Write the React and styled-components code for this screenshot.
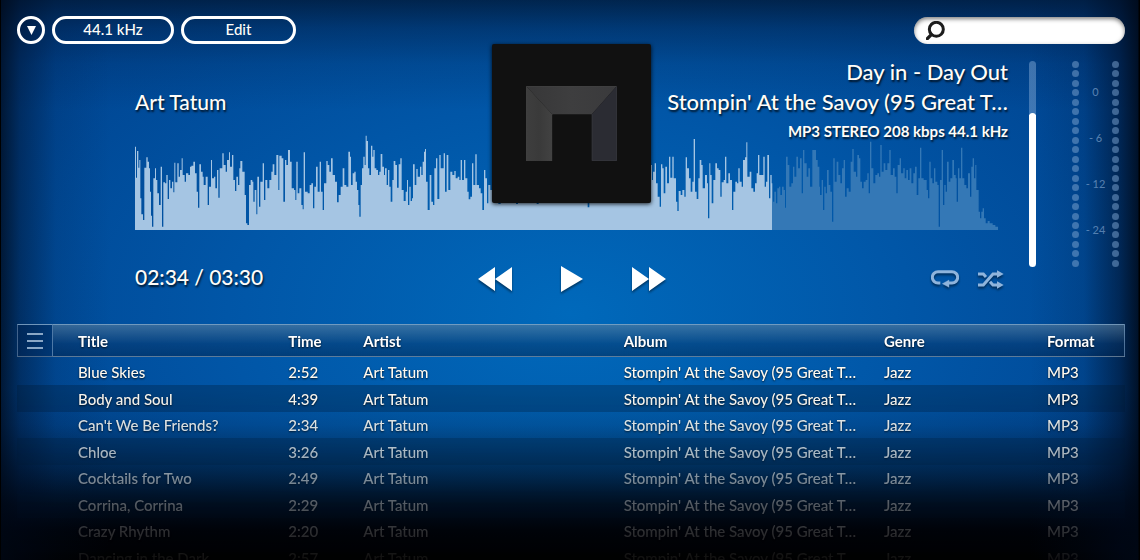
import React from "react";
import styled, { createGlobalStyle, css } from "styled-components";

const GlobalStyle = createGlobalStyle`
  *, *::before, *::after { box-sizing: border-box; }
  body {
    margin: 0;
    background: #000;
    color: #fffdf8;
    font-family: Lato, "Liberation Sans", sans-serif;
    font-size: 15px;
    font-weight: 500;
  }
  button, input { font: inherit; color: inherit; }
`;

/* Waveform outline, in thirds of a pixel: x, y pairs per stretch of the track. */
const WAVE_PARTS = [
  {
    start: 0,
    points:
      "15,65 18,158 21,78 25,128 28,105 31,220 34,268 39,285 43,128 49,97 53,110 57,130 60,200 63,272 66,305 70,160 75,130 78,165 82,205 87,240 92,125 96,305 100,172 105,175 109,150 113,222 117,165 121,190 126,170 130,202 133,113 136,172 142,115 146,155 150,135 155,100 158,150 164,170 168,145 175,150 180,125 184,122 190,110 195,145 200,200 204,248 208,118 213,140 218,155 221,180 227,155 233,240 237,185 243,105 246,160 252,155 256,190 261,135 265,218 269,130 277,85 281,120 287,140 291,105 297,82 300,125 306,90 310,165 315,198 319,155 324,180 328,130 331,108 337,140 344,210 348,295 352,300 357,180 362,165 367,170 370,230 374,195 379,268 382,155 387,245 391,170 398,115 402,225 406,165 412,190 418,165 424,140 428,118 433,150 439,90 445,195 448,92 455,100 460,230 465,105 469,120 474,75 480,110 485,190 492,195 496,225 499,110 503,205 508,190 514,240 518,253 521,82 525,200 533,205 539,180 544,175 549,250 553,185 558,125 563,200 569,110 573,200 578,255 582,175 589,108 593,120 598,140 603,100 608,150 615,170 621,232 626,210 632,185 638,130 643,180 649,185 655,80",
  },
  {
    start: 630,
    points:
      "30,95 33,180 38,145 43,140 47,170 51,195 55,240 58,275 62,180 66,130 70,95 74,120 77,32 80,48 84,130 88,150 93,62 97,95 100,75 104,130 109,135 114,150 118,140 122,87 127,125 132,150 135,130 140,180 144,135 148,185 152,230 157,165 161,108 166,120 171,188 176,118 181,100 185,195 191,228 197,200 201,165 204,240 208,185 212,228 216,220 219,118 224,180 229,132 233,155 240,125 244,150 248,110 252,80 255,72 258,170 263,255 269,150 274,230 279,240 283,130 288,100 292,222 298,90 302,130 311,85 315,200 320,90 325,195 331,140 337,150 343,138 347,160 353,155 358,165 362,105 366,165 372,105 376,160 382,200 386,223 391,215 396,115 400,180 406,88 410,180 417,190 422,205 427,255 432,135 436,160 441,235 445,180 451,195 456,205 475,237 482,200 528,237 534,200 590,237 596,200 743,247 748,200",
  },
  {
    start: 1530,
    points:
      "30,120 36,165 39,140 44,115 48,175 53,215 59,245 63,118 67,130 71,205 76,125 81,175 87,95 91,158 97,95 101,160 108,230 112,258 116,198 122,210 127,195 133,215 137,97 141,130 147,160 152,200 157,170 161,42 165,200 170,222 175,160 179,105 184,120 188,190 195,150 201,175 204,280 208,115 211,150 215,235 220,165 226,115 231,130 236,135 241,215 245,172 251,165 255,95 259,175 265,145 270,165 276,255 280,200 286,170 291,175 295,130 299,170 305,185 309,105 315,97 319,52 322,155 329,140 334,190 340,200 345,175 350,145 354,90 358,150 365,150 370,95 374,185 378,170 382,90 387,220 391,150 395,175 399,230 403,200 408,235 412,190 417,185 421,210 426,185 431,195 435,248 438,95 443,120 448,185 454,175 459,125 463,155 469,95 474,130 480,100 485,205 489,75 493,115 500,155 505,130 510,185 517,75 525,75 528,105 533,125 538,185",
  },
  {
    start: 2070,
    points:
      "0,210 5,165 9,255 13,185 17,205 21,135 26,180 31,200 36,290 40,100 44,170 50,110 55,150 61,175 66,130 71,105 75,215 80,190 86,200 92,110 97,72 101,140 108,155 112,90 117,100 121,170 126,190 131,170 137,165 142,145 146,205 150,50 154,130 160,175 166,150 172,145 177,155 181,60 185,140 191,115 196,135 202,115 208,75 212,150 219,130 224,155 229,205 233,120 239,100 243,145 250,130 254,160 259,135 264,165 269,130 274,175 280,145 285,125 290,210 295,160 300,68 304,160 311,165 316,165 320,195 324,220 328,110 332,160 337,175 342,130 346,170 352,180 356,305 360,165 365,75 369,240 373,180 377,200 381,110 386,170 391,160 397,105 402,150 407,160 410,230 414,130 418,160 423,68 427,160 433,180 439,190 444,145 450,215 454,125 458,100 462,160 466,120 469,195 476,260 480,280 484,260 488,250 492,280 497,295 503,288 509,295 518,300 526,305 536,312",
  },
];

const WAVE_PATH =
  "M15 315" +
  WAVE_PARTS.map(({ start, points }) =>
    points
      .split(" ")
      .map((pair) => {
        const [x, y] = pair.split(",").map(Number);
        return `H${start + x}V${y}`;
      })
      .join("")
  ).join("") +
  "V315Z";

const ALBUM = "Stompin' At the Savoy (95 Great T…";

const TRACKS = [
  ["Blue Skies", "2:52"],
  ["Body and Soul", "4:39"],
  ["Can't We Be Friends?", "2:34"],
  ["Chloe", "3:26"],
  ["Cocktails for Two", "2:49"],
  ["Corrina, Corrina", "2:29"],
  ["Crazy Rhythm", "2:20"],
  ["Dancing in the Dark", "2:57"],
];

const Page = styled.div`
  height: 100vh;
  display: flex;
  flex-direction: column;
  overflow: hidden;
  background:
    linear-gradient(to right, #000 1px, rgba(0, 8, 22, 0.75) 1px, rgba(0, 10, 30, 0.42) 20px, rgba(0, 20, 50, 0.12) 56px, transparent 110px),
    linear-gradient(to left, #000 1px, rgba(0, 8, 22, 0.85) 2px, rgba(0, 10, 30, 0.55) 20px, rgba(0, 20, 50, 0.15) 56px, transparent 110px),
    linear-gradient(to bottom, rgba(0, 12, 30, 0.62), rgba(0, 15, 40, 0.35) 28px, rgba(0, 20, 50, 0.12) 64px, transparent 110px),
    linear-gradient(to top, #000, rgba(0, 0, 4, 0.97) 30px, rgba(0, 2, 8, 0.86) 56px, rgba(0, 5, 14, 0.62) 82px, rgba(0, 8, 20, 0.38) 109px, rgba(0, 10, 30, 0.15) 135px, transparent 170px),
    radial-gradient(ellipse 60% 75% at 50% 56%, #0069bb, #0156a7 50%, #00438f);
`;

const Toolbar = styled.header`
  display: flex;
  align-items: center;
  gap: 7px;
  height: 44px;
  padding: 16px 15px 0 17px;
`;

const PillButton = styled.button`
  display: flex;
  align-items: center;
  justify-content: center;
  width: ${(p) => p.$width};
  height: 28px;
  padding: 0 0 3px;
  border: 3px solid #fff;
  border-radius: 14px;
  background: transparent;
  line-height: 20px;
`;

const RoundButton = styled(PillButton)`
  padding: 0;
`;

const SearchBox = styled.label`
  display: flex;
  align-items: center;
  width: 211px;
  height: 27px;
  margin-left: auto;
  padding: 0 12px;
  border-radius: 14px;
  background: #fff;
  box-shadow: inset 0 2px 4px rgba(0, 0, 0, 0.5);
`;

const SearchInput = styled.input`
  flex: 1;
  min-width: 0;
  padding: 0 6px;
  border: 0;
  outline: 0;
  background: transparent;
  color: #222;
  appearance: none;
`;

const Deck = styled.main`
  display: flex;
  padding: 0 21px 0 135px;
`;

const Player = styled.section`
  flex: 1;
  min-width: 0;
`;

const Stage = styled.div`
  display: grid;
  grid-template-columns: minmax(0, 1fr);
  height: 186px;

  > * { grid-area: 1 / 1; }
`;

const Wave = styled.svg`
  align-self: end;
  display: block;
  width: calc(100% - 10px);
  height: 95px;
`;

const Cover = styled.div`
  position: relative;
  justify-self: center;
  align-self: start;
  display: grid;
  place-items: center;
  width: 159px;
  height: 159px;
  border-radius: 2px;
  background: #111;
  box-shadow: 0 1px 4px rgba(0, 0, 0, 0.85);
`;

const TrackInfo = styled.div`
  z-index: 1;
  display: flex;
  justify-content: space-between;
  align-items: flex-start;
  padding-top: 13px;
  line-height: 30px;
  text-shadow: 1px 2px 2px rgba(0, 0, 0, 0.75);
`;

const ArtistName = styled.div`
  padding-top: 30px;
  font-size: 21px;
`;

const NowPlaying = styled.div`
  font-size: 22px;
  text-align: right;
`;

const StreamInfo = styled.div`
  font-size: 15px;
  line-height: 28px;
  font-weight: 700;
`;

const Controls = styled.div`
  display: grid;
  grid-template-columns: 1fr auto 1fr;
  align-items: center;
  height: 36px;
  margin: 31px 0 27px;
`;

const TimeReadout = styled.div`
  padding-bottom: 4px;
  font-size: 21px;
  line-height: 28px;
  text-shadow: 1px 2px 2px rgba(0, 0, 0, 0.75);
`;

const ButtonGroup = styled.div`
  display: flex;
  align-items: center;
  gap: ${(p) => p.$gap};
  justify-content: ${(p) => p.$align || "center"};
  padding-right: ${(p) => p.$inset || "0"};
`;

const IconButton = styled.button`
  display: flex;
  padding: 0;
  border: 0;
  background: transparent;
  color: ${(p) => (p.$muted ? "#8fb4dc" : "#fff")};
  filter: drop-shadow(0 2px 1px rgba(0, 0, 0, 0.45));
`;

const Levels = styled.aside`
  display: flex;
  align-items: stretch;
  align-self: flex-start;
  gap: 36px;
  height: 206px;
  margin: 17px 0 0 21px;
`;

const VolumeSlider = styled.input`
  appearance: none;
  writing-mode: vertical-lr;
  direction: rtl;
  flex: none;
  width: 7px;
  height: 206px;
  margin: 0;
  border-radius: 4px;
  background: linear-gradient(to top, #fff ${(p) => p.$level}, rgba(125, 165, 210, 0.5) ${(p) => p.$level});

  &::-webkit-slider-thumb {
    appearance: none;
    width: 7px;
    height: 7px;
    border-radius: 50%;
    background: #fff;
  }
`;

const Meter = styled.div`
  display: grid;
  grid-template-columns: 7px 33px 7px;
`;

const Channel = styled.div`
  display: flex;
  flex-direction: column;
  justify-content: space-between;
`;

const Led = styled.span`
  width: 7px;
  height: 7px;
  border-radius: 50%;
  background: rgba(125, 165, 210, 0.5);
`;

const Scale = styled.div`
  display: flex;
  flex-direction: column;
  gap: 30px;
  padding-top: 23px;
  color: rgba(140, 175, 215, 0.6);
  font-size: 11px;
  line-height: 16px;
  text-align: center;
`;

const Library = styled.section`
  flex: 1;
  min-height: 0;
  overflow: hidden;
  padding: 0 15px 0 17px;
  mask-image: linear-gradient(
    to top,
    rgba(0, 0, 0, 0.06), rgba(0, 0, 0, 0.19) 30px, rgba(0, 0, 0, 0.33) 56px, rgba(0, 0, 0, 0.5) 82px,
    rgba(0, 0, 0, 0.67) 109px, rgba(0, 0, 0, 0.85) 135px, rgba(0, 0, 0, 0.97) 162px, #000 180px
  );
`;

const TrackTable = styled.table`
  width: 100%;
  table-layout: fixed;
  border-collapse: separate;
  border-spacing: 0;
  line-height: 20px;
  color: #fffaf0;
  text-shadow: 0 1px 2px rgba(0, 0, 0, 0.8);

  tbody::before {
    content: "";
    display: block;
    height: 2px;
  }
`;

const Col = styled.col`
  width: ${(p) => p.$width};
`;

const cellBase = css`
  padding: 0 0 0 ${(p) => (p.$indent ? "25px" : "0")};
  overflow: hidden;
  white-space: nowrap;
  text-align: left;
`;

const HeadCell = styled.th`
  ${cellBase}
  height: 33px;
  border-top: 1px solid rgba(150, 185, 215, 0.75);
  border-bottom: 1px solid rgba(110, 130, 150, 0.7);
  background: linear-gradient(to bottom, rgba(90, 125, 155, 0.6), rgba(10, 50, 95, 0.45) 60%, rgba(0, 35, 75, 0.5));
  color: #fff;
  font-weight: 700;

  &:first-child,
  &:last-child {
    border-right: 1px solid rgba(130, 165, 200, 0.6);
  }
  &:first-child {
    border-left: 1px solid rgba(110, 140, 175, 0.6);
    background: rgba(0, 25, 65, 0.3);
  }
`;

const MenuButton = styled.button`
  display: flex;
  flex-direction: column;
  gap: 5px;
  width: 16px;
  margin: 0 auto;
  padding: 0;
  border: 0;
  background: transparent;
`;

const MenuLine = styled.span`
  width: 100%;
  height: 2px;
  background: #8aa7c6;
`;

const Row = styled.tr`
  height: 26px;

  &:nth-child(even) {
    height: 27px;
    background: rgba(0, 25, 50, 0.32);
  }
`;

const Cell = styled.td`
  ${cellBase}
`;

const LED_COUNT = 22;

function LedColumn() {
  return (
    <Channel>
      {Array.from({ length: LED_COUNT }, (_, i) => (
        <Led key={i} />
      ))}
    </Channel>
  );
}

function Logo() {
  return (
    <svg width="91" height="75" viewBox="0 0 272 225" aria-hidden="true">
      <defs>
        <linearGradient id="leg" x1="0" y1="0" x2="1" y2="0">
          <stop offset="0" stopColor="#3e3e3e" />
          <stop offset="0.5" stopColor="#3a3a3a" />
          <stop offset="1" stopColor="#424242" />
        </linearGradient>
        <linearGradient id="top" x1="0" y1="0" x2="1" y2="0">
          <stop offset="0" stopColor="#373738" />
          <stop offset="0.5" stopColor="#3e3e3f" />
          <stop offset="1" stopColor="#3a3a3c" />
        </linearGradient>
      </defs>
      <path d="M0 0L78 85V225H0Z" fill="url(#leg)" />
      <path d="M0 0H272L197 85H78Z" fill="url(#top)" />
      <path d="M272 0V225H197V85Z" fill="#2b2c33" />
      <path d="M1 225V1H271" fill="none" stroke="#444" strokeWidth="2" />
      <path d="M271 2V224H198V85" fill="none" stroke="#38393f" strokeWidth="2" />
    </svg>
  );
}

export default function App() {
  return (
    <Page>
      <GlobalStyle />
      <Toolbar>
        <RoundButton type="button" $width="28px" aria-label="Options">
          <svg width="9" height="9" viewBox="0 0 18 18" fill="#fff" aria-hidden="true">
            <path d="M0 0H18L9 18Z" />
          </svg>
        </RoundButton>
        <PillButton type="button" $width="122px">44.1 kHz</PillButton>
        <PillButton type="button" $width="115px">Edit</PillButton>
        <SearchBox>
          <svg width="19" height="19" viewBox="0 0 57 57" fill="none" stroke="#1c1c1c" aria-hidden="true">
            <circle cx="31" cy="25" r="21" strokeWidth="9" />
            <path d="M16 41L4 53" strokeWidth="10" strokeLinecap="round" />
          </svg>
          <SearchInput type="search" aria-label="Search" />
        </SearchBox>
      </Toolbar>

      <Deck>
        <Player>
          <Stage>
            <Wave viewBox="15 30 2589 285" preserveAspectRatio="none" aria-hidden="true">
              <defs>
                <linearGradient id="progress">
                  <stop offset="0.738" stopColor="#a5c5e3" />
                  <stop offset="0.738" stopColor="#3478b6" />
                </linearGradient>
              </defs>
              <path d={WAVE_PATH} fill="url(#progress)" />
            </Wave>
            <Cover>
              <Logo />
            </Cover>
            <TrackInfo>
              <ArtistName>Art Tatum</ArtistName>
              <NowPlaying>
                <div>Day in - Day Out</div>
                <div>{ALBUM}</div>
                <StreamInfo>MP3 STEREO 208 kbps 44.1 kHz</StreamInfo>
              </NowPlaying>
            </TrackInfo>
          </Stage>
          <Controls>
            <TimeReadout>02:34 / 03:30</TimeReadout>
            <ButtonGroup $gap="49px">
              <IconButton type="button" aria-label="Previous">
                <svg width="34" height="24" viewBox="0 0 34 24" fill="currentColor">
                  <path d="M0 12L17 0V24ZM17 12L34 0V24Z" />
                </svg>
              </IconButton>
              <IconButton type="button" aria-label="Play">
                <svg width="22" height="26" viewBox="0 0 22 26" fill="currentColor">
                  <path d="M0 0L22 13L0 26Z" />
                </svg>
              </IconButton>
              <IconButton type="button" aria-label="Next">
                <svg width="34" height="24" viewBox="0 0 34 24" fill="currentColor">
                  <path d="M0 0L17 12L0 24ZM17 0L34 12L17 24Z" />
                </svg>
              </IconButton>
            </ButtonGroup>
            <ButtonGroup $gap="19px" $align="flex-end" $inset="4px">
              <IconButton type="button" $muted aria-label="Repeat">
                <svg width="28" height="18" viewBox="0 0 84 54" fill="none" stroke="currentColor">
                  <path d="M28 39H21A17 17 0 0 1 21 5H63A17 17 0 0 1 63 39H52" strokeWidth="9" />
                  <path d="M34 41L54 30V52Z" fill="currentColor" strokeWidth="1" />
                </svg>
              </IconButton>
              <IconButton type="button" $muted aria-label="Shuffle">
                <svg width="26" height="19" viewBox="0 0 78 57" fill="none" stroke="currentColor" strokeWidth="9">
                  <path d="M0 45H16L45 12H58M0 12H16L24 21M36 35L45 45H58" />
                  <path d="M57 1L77 12L57 23ZM57 34L77 45L57 56Z" fill="currentColor" stroke="none" />
                </svg>
              </IconButton>
            </ButtonGroup>
          </Controls>
        </Player>
        <Levels>
          <VolumeSlider type="range" min="0" max="100" defaultValue="74" $level="74%" aria-label="Volume" />
          <Meter>
            <LedColumn />
            <Scale>
              <span>0</span>
              <span>- 6</span>
              <span>- 12</span>
              <span>- 24</span>
            </Scale>
            <LedColumn />
          </Meter>
        </Levels>
      </Deck>

      <Library>
        <TrackTable>
          <colgroup>
            <Col $width="36px" />
            <Col />
            <Col $width="75px" />
            <Col $width="23.5%" />
            <Col $width="23.5%" />
            <Col $width="163px" />
            <Col $width="78px" />
          </colgroup>
          <thead>
            <tr>
              <HeadCell>
                <MenuButton type="button" aria-label="Columns">
                  <MenuLine />
                  <MenuLine />
                  <MenuLine />
                </MenuButton>
              </HeadCell>
              <HeadCell $indent>Title</HeadCell>
              <HeadCell>Time</HeadCell>
              <HeadCell>Artist</HeadCell>
              <HeadCell>Album</HeadCell>
              <HeadCell>Genre</HeadCell>
              <HeadCell>Format</HeadCell>
            </tr>
          </thead>
          <tbody>
            {TRACKS.map(([title, time]) => (
              <Row key={title}>
                <Cell />
                <Cell $indent>{title}</Cell>
                <Cell>{time}</Cell>
                <Cell>Art Tatum</Cell>
                <Cell>{ALBUM}</Cell>
                <Cell>Jazz</Cell>
                <Cell>MP3</Cell>
              </Row>
            ))}
          </tbody>
        </TrackTable>
      </Library>
    </Page>
  );
}
